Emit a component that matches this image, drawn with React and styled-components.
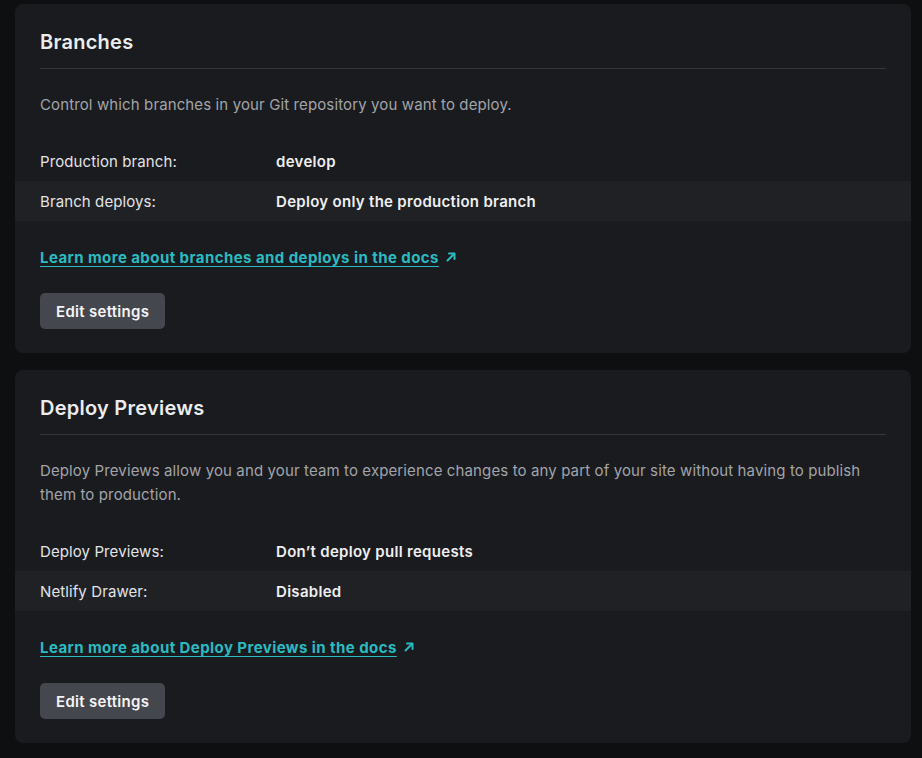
import React from "react";
import styled, { createGlobalStyle } from "styled-components";

const Global = createGlobalStyle`
  html, body { margin: 0; padding: 0; background: #0d0f11; }
  body { font-family: Inter, "Noto Sans", sans-serif; -webkit-font-smoothing: antialiased; }
`;

const Page = styled.div`
  padding: 4px 11px 14px 15px;
  display: flex;
  flex-direction: column;
  gap: 17px;
  background: #0d0f11;
  min-height: 758px;
  box-sizing: border-box;
`;

const Card = styled.section`
  background: #1a1b1f;
  border-radius: 8px;
  padding: 24px 0 24px;
  display: flex;
  flex-direction: column;
`;

const Title = styled.h2`
  margin: 0 25px;
  padding-bottom: 12px;
  border-bottom: 1px solid #34363b;
  font-size: 20px;
  line-height: 28px;
  font-weight: 600;
  letter-spacing: 0.25px;
  color: #ebecee;
`;

const Desc = styled.p`
  margin: 24px 25px 24px;
  font-size: 15px;
  line-height: 24px;
  letter-spacing: 0.12px;
  color: #a2a4a9;
`;

const Row = styled.div`
  display: grid;
  grid-template-columns: 236px 1fr;
  align-items: center;
  height: 40px;
  padding: 0 25px;
  background: ${p => (p.$alt ? "#202125" : "transparent")};
  font-size: 15px;
`;

const Label = styled.span`
  color: #e2e3e6;
  letter-spacing: 0.1px;
`;

const Value = styled.span`
  color: #eeeff1;
  font-weight: 600;
  letter-spacing: 0.3px;
`;

const LinkLine = styled.div`
  margin: 25px 25px 23px;
  line-height: 24px;
  font-size: 15px;
`;

const DocLink = styled.a`
  color: #2bbac1;
  font-weight: 700;
  letter-spacing: 0.43px;
  text-decoration: underline;
  text-underline-offset: 3px;
  text-decoration-thickness: 1px;
  cursor: pointer;
`;

const Arrow = styled.svg`
  width: 14px;
  height: 14px;
  margin-left: 5px;
  vertical-align: -1px;
`;

const Button = styled.button`
  margin: 0 25px;
  align-self: flex-start;
  height: 36px;
  padding: 0 16px;
  border: none;
  border-radius: 5px;
  background: #45474e;
  color: #f4f4f6;
  font-family: inherit;
  font-size: 15px;
  font-weight: 600;
  letter-spacing: 0.3px;
  cursor: pointer;
`;

const ArrowIcon = () => (
  <Arrow viewBox="0 0 14 14" fill="none" stroke="#2bbac1" strokeWidth="2" strokeLinecap="round" strokeLinejoin="round">
    <path d="M3.5 10.5 L10 4" />
    <path d="M5 3.5 H10.5 V9" />
  </Arrow>
);

const sections = [
  {
    title: "Branches",
    desc: "Control which branches in your Git repository you want to deploy.",
    rows: [
      ["Production branch:", "develop"],
      ["Branch deploys:", "Deploy only the production branch"],
    ],
    link: "Learn more about branches and deploys in the docs",
  },
  {
    title: "Deploy Previews",
    desc:
      "Deploy Previews allow you and your team to experience changes to any part of your site without having to publish them to production.",
    rows: [
      ["Deploy Previews:", "Don’t deploy pull requests"],
      ["Netlify Drawer:", "Disabled"],
    ],
    link: "Learn more about Deploy Previews in the docs",
  },
];

export default function App() {
  return (
    <>
      <Global />
      <Page>
        {sections.map(s => (
          <Card key={s.title}>
            <Title>{s.title}</Title>
            <Desc>{s.desc}</Desc>
            <div>
              {s.rows.map(([l, v], i) => (
                <Row key={l} $alt={i % 2 === 1}>
                  <Label>{l}</Label>
                  <Value>{v}</Value>
                </Row>
              ))}
            </div>
            <LinkLine>
              <DocLink>{s.link}</DocLink>
              <ArrowIcon />
            </LinkLine>
            <Button>Edit settings</Button>
          </Card>
        ))}
      </Page>
    </>
  );
}
